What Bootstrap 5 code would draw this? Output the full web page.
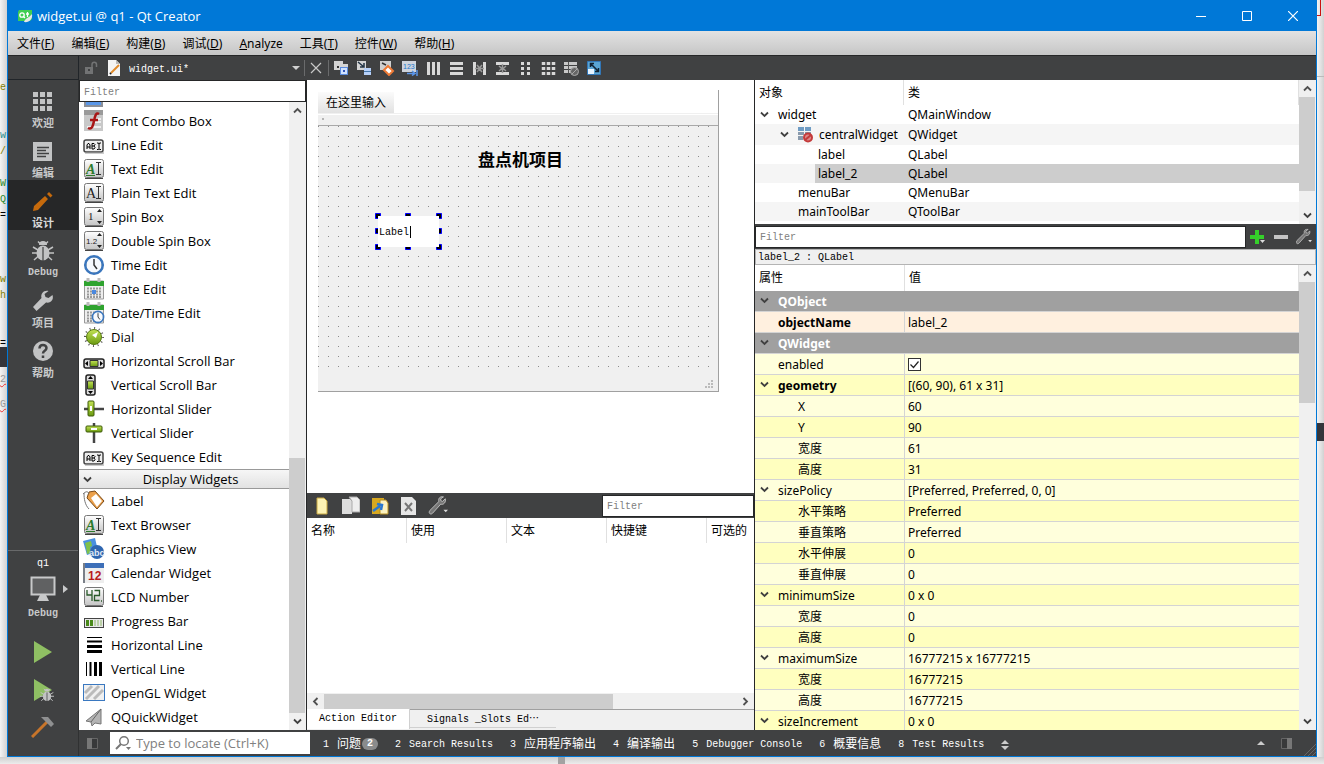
<!DOCTYPE html>
<html lang="zh-CN">
<head>
<meta charset="utf-8">
<meta name="viewport" content="width=device-width, initial-scale=1">
<title>widget.ui @ q1 - Qt Creator</title>
<link href="https://cdn.jsdelivr.net/npm/bootstrap@5.3.0/dist/css/bootstrap.min.css" rel="stylesheet">
<style>
:root{--panel:#404142;--edge:#262728;--ui:"Noto Sans","Noto Sans CJK SC",sans-serif;--wide:"Open Sans","Noto Sans CJK SC",sans-serif;--fixed:"Liberation Mono","Noto Sans CJK SC",monospace}
body{font-family:var(--ui);font-size:12px;line-height:20px;color:#000;background:#e4e4e4;overflow:hidden}
button,input,select{font:inherit;color:inherit;border:0;padding:0;background:none;border-radius:0}
svg{display:block;flex:none}
a{color:inherit;text-decoration:none}
.mono{font-family:var(--fixed);font-size:10px}
.mono .han{font-size:12px}
.dark{background:var(--panel);color:#fff}
.fill{flex:1 1 0;min-height:0;min-width:0}
.desk{width:7px;overflow:hidden;line-height:16px;background:linear-gradient(to right,#f4f4f4,#d2d2d2)}
.desk-l{padding-top:80px;font-family:var(--fixed);font-size:10px}
.desk-l .code{height:16px}
.desk-l .tip{height:20px;margin-top:-5px;background:#34353a}
.desk-l .note{height:25px;line-height:25px;color:#999;text-decoration:underline wavy #e33 1px}
.desk-r .mark-red{height:16px;width:4px;border-right:1px solid #c11;border-bottom:1px solid #c11}
.desk-r .rule{height:61px;border-bottom:1px solid #bbb}
.desk-r .tip{height:18px;background:#34353a;margin-top:346px}
.desk-b{height:7px;background:linear-gradient(#cfcfcf,#ececec)}
.desk-b i{width:7px;margin-left:551px;background:#a2a2a2}
.app{border:1px solid #0078d7;border-top:0}
.titlebar,.menus,.tools,.status,.bar,.who,.tree,.field,.hsb,.tabs{flex-shrink:0}
.bar .field.flex-grow-1{flex-shrink:1}
.titlebar{height:31px;background:#0078d7;color:#fff;font-family:var(--wide);font-size:13px;padding-left:9px}
.titlebar button{width:46px;height:31px}
.menus{height:24px;padding:0 9px;background:linear-gradient(#e2e2e2,#c6c6c6);gap:17px;line-height:26px}
.tools{height:25px;border-top:1px solid var(--edge)}
.modes{width:71px;border-right:1px solid #303132;color:#c8c9ca}
.mode{height:50px;width:100%;font-size:11px;line-height:14px;font-weight:700;gap:4px;padding-top:10px}
.mode.on{background:var(--edge);color:#d8d8d8}
.mode .mono,.kit .mono{font-weight:700;font-size:10px}
.kit{border-top:1px solid #68696a;height:206px;padding-top:1px}
.kit .go{margin-top:14px}
.box{width:228px;border-right:1px solid var(--edge)}
.field{height:22px;background:#fff;color:#000;padding:2px 4px 0;border:1px solid var(--edge);min-width:0}
.field::placeholder{color:#808080;opacity:1}
.field:focus,select:focus{outline:0}
.items{font-family:var(--wide);font-size:13px;min-height:0;padding-bottom:1px}
.item{height:24px;padding-left:4px;gap:6px;flex:none;white-space:nowrap}
.group{height:20px;flex:none;border-top:1px solid #999;border-bottom:1px solid #999;background:linear-gradient(#f6f6f6,#e2e2e2);line-height:18px}
.sb{width:17px;background:#f0f0f0;flex:none;display:flex;flex-direction:column}
.sb .cap{height:17px;display:flex;align-items:center;justify-content:center;flex:none}
.sb .track{flex:1;min-height:0;padding-right:1px}
.sb .thumb{background:#cdcdcd}
.hsb{height:16px;background:#f0f0f0}
.hsb .thumb{background:#cdcdcd;height:15px}
.center{flex:447 1 0;min-width:0;border-right:1px solid var(--edge)}
.right{flex:561 1 0;min-width:0}
.canvas{flex:393 1 0;min-height:0;background:#fff;padding:10px 11px}
.form{width:401px;height:302px;background:#f0f0f0;border-right:1px solid #a0a0a0;border-bottom:1px solid #a0a0a0}
.fmenu{height:24px;background:#fff;border-bottom:1px solid #f0f0f0;padding-top:2px}
.fmenu button{padding:0 8px;height:21px;background:linear-gradient(#fbfbfb,#e2e2e2)}
.ftool{height:12px;border-top:1px solid #fff;border-bottom:1px solid #a9a9a9;padding:3px 4px}
.ftool i{display:block;width:2px;height:2px;background:#b4b4b4}
.grid{height:245px;position:relative;background-image:linear-gradient(transparent 1px,#f0f0f0 1px),linear-gradient(to right,#8c8c8c 1px,transparent 1px);background-size:10px 10px}
.caption{left:160px;top:22px;font-size:17px;line-height:24px;font-weight:700}
.sel{left:57px;top:87px;width:67px;height:37px}
.sel input{left:3px;top:3px;width:61px;height:31px;background:#fff;padding:2px 1px 0;font-size:10px}
.sel .caret{left:35px;top:13px;width:1px;height:12px;background:#000}
.actions{flex:237 1 0;min-height:0;background:#fff}
.bar{height:25px}
.hd{height:25px;line-height:24px;padding:0 4px;font-weight:400;border-right:1px solid #e0e0e0;white-space:nowrap}
.tabs{height:21px;background:#f0f0f0}
.tabs button{height:20px}
.tabs .t1{background:#fff;width:103px;border-right:1px solid #d0d0d0}
.tabs .t2{width:146px;height:19px;border-top:1px solid #a0a0a0;border-bottom:1px solid #d0d0d0}
.tabs .rest{border-top:1px solid #a0a0a0}
table{table-layout:fixed;width:100%;border-collapse:separate;border-spacing:0}
td,th{padding:0;overflow:hidden;white-space:nowrap}
.tree{background:#fff;height:144px}
.tree td{height:19px;line-height:19px}
.tree tr.first td{line-height:18px}
.tree tr.mid td{height:21px}
.tree .alt td{background:#f5f5f5}
.tree .alt .cur{background:#cdcdcd}
.tree div.cur{padding-left:3px}
.who{height:16px;line-height:15px;background:#f0f0f0;border:1px solid #b4b4b4;padding:0 2px}
.props .hd{height:26px;line-height:26px}
.props td{height:21px;line-height:20px;padding-top:1px;padding-bottom:0;line-height:19px;border-bottom:1px solid #d4d4d4}
.props td:first-child{border-right:1px solid #d4d4d4}
.props td:nth-child(2){padding-left:3px}
.props .a td{background:#ffffdc}
.props .b td{background:#ffffbf}
.props .o td{background:#fff0df}
.props .g td{background:#a0a0a0;color:#fff;font-weight:700;border-right:0}
.tw{display:inline-block;width:23px;padding-left:5px;vertical-align:top}
.tw svg{margin-top:4px}
td.lead1{padding-left:23px}
td.sub2{padding-left:43px}
.tick{appearance:none;width:13px;height:13px;margin:3px 0 0;border:1px solid #333;background:#fff url("data:image/svg+xml,%3Csvg xmlns='http://www.w3.org/2000/svg' viewBox='0 0 11 11'%3E%3Cpath d='M1.500 5.500l3 3 5-6' fill='none' stroke='%23222' stroke-width='1.200'/%3E%3C/svg%3E");display:block}
.status{height:26px}
.status .outs{gap:17px;padding:3px 0 0 13px}
.status .outs button{display:flex;align-items:center;gap:8px}
.locate{width:200px;height:22px;background:#fff}
.locate input{font-family:var(--wide);font-size:13px;width:170px}
.locate input::placeholder{color:#808080;opacity:1}
.pill{width:16px;height:12px;border-radius:6px;background:#8a8b8c;font-weight:700;line-height:12px;margin:-2px 0 0 -7px}
</style>
</head>
<body class="vh-100 d-flex flex-column m-0">
<svg width="0" height="0" class="position-absolute" aria-hidden="true"><defs>
<linearGradient id="gk" x2="0" y2="1"><stop stop-color="#fff"/><stop offset="1" stop-color="#c4c4c4"/></linearGradient>
<linearGradient id="gg" x2="0" y2="1"><stop stop-color="#c4e356"/><stop offset="1" stop-color="#6a9a10"/></linearGradient>
<symbol id="dn" viewBox="0 0 9 9"><path d="M1 2.500l3.500 3.500 3.500-3.500" fill="none" stroke="#404040" stroke-width="1.800"/></symbol>
<symbol id="up" viewBox="0 0 9 9"><path d="M1 6.500l3.500-3.500 3.500 3.500" fill="none" stroke="#505050" stroke-width="1.800"/></symbol>
<symbol id="lt" viewBox="0 0 9 9"><path d="M6.500 1l-3.500 3.500 3.500 3.500" fill="none" stroke="#505050" stroke-width="1.800"/></symbol>
<symbol id="rt" viewBox="0 0 9 9"><path d="M2.500 1l3.500 3.500-3.500 3.500" fill="none" stroke="#505050" stroke-width="1.800"/></symbol>
<symbol id="key" viewBox="0 0 22 22"><rect x="1.500" y="1.500" width="19" height="18" rx="2" fill="url(#gk)" stroke="#777"/><path d="M2 20.500h18" stroke="#444"/></symbol>
<symbol id="bug" viewBox="0 0 22 22"><path d="M7 5a4 4 0 0 1 8 0z" fill="#c2c3c4"/><ellipse cx="11" cy="13" rx="6.500" ry="7.500" fill="#c2c3c4"/><path d="M6 1.500l2.500 2.500M16 1.500L13.500 4M1 7l5 3M0 13h6M2 20l4.500-4M21 7l-5 3M22 13h-6M20 20l-4.500-4" fill="none" stroke="#c2c3c4" stroke-width="1.500"/><path d="M11 7v14" stroke="#404142" stroke-width="1.200"/></symbol>
<symbol id="wrench" viewBox="0 0 22 22"><path d="M20.500 5l-4 3-3-1-1-3 4-3c-5-1-8 3-7 7L1 17l3.500 4L14 12.500c5 1 8-3 6.500-7.500z" fill="#c2c3c4"/></symbol>
<symbol id="spanner" viewBox="0 0 22 22"><path d="M19 3l-3 3-2-1 0-2 3-2c-4-1-6 2-5 5L2 16c-2 3 1 5 3 3L14 9c3 1 6-2 5-6z" fill="#777" stroke="#c4c4c4"/><path d="M17 15h5l-2.500 3z" fill="#ddd"/></symbol>
<symbol id="abi" viewBox="0 0 22 22"><rect x="1" y="6" width="19" height="12" rx="2" fill="#eee" stroke="#444" stroke-width="1.500"/><path d="M2 19h19" stroke="#999"/><path d="M4 15v-4l1-1.500h1l1 1.500v4M4 13h3M9 15V9.500h2l1 1-1 1.500 1 1.500-1 1.500zM9 12h2M14 9h1.500l.5 1 .5-1H18M16 10v5M14 15.500h1.500l.5-.5.5.5H18" fill="none" stroke="#000"/></symbol>
<symbol id="cal" viewBox="0 0 22 22"><path d="M1.500 3h19v18h-19z" fill="#eee" stroke="#999"/><path d="M1 3h20v5H1z" fill="#2fa32f"/><path d="M5 0v4M16 0v4" stroke="#bbb" stroke-width="3"/><path d="M4 10.500h14M4 13.500h14M4 16.500h14M4 19h14" stroke="#999" stroke-width="2" stroke-dasharray="2 1"/></symbol>
<symbol id="clock" viewBox="0 0 22 22"><circle cx="11" cy="11" r="8.800" fill="#f6f9fd" stroke="#3a76bd" stroke-width="2.500"/><path d="M11 5v6l3 4" fill="none" stroke="#333" stroke-width="1.500"/><path d="M11 3v1M19 11h-1M3 11h1M11 18v1" stroke="#789"/></symbol>
</defs></svg>

<div class="d-flex fill">
<aside class="desk desk-l flex-shrink-0" aria-hidden="true">
<div class="code" style="color:#808000">e</div><div class="code"></div><div class="code"></div>
<div class="code" style="color:#2a8f8f">w</div><div class="code" style="color:#808000">/</div><div class="code"></div>
<div class="code" style="color:#2a8a2a">W</div><div class="code" style="color:#2a8a2a">Q</div><div class="code">=</div>
<div class="code"></div><div class="code"></div><div class="code"></div>
<div class="code" style="color:#808000">w</div><div class="code" style="color:#808000">h</div><div class="code"></div><div class="code"></div><div class="code">=</div>
<div class="tip"></div><div class="note">2</div><div class="note">G</div>
</aside>

<main class="app flex-grow-1 d-flex flex-column" style="min-width:0">
<header class="titlebar d-flex align-items-center">
<svg width="16" height="16" viewBox="0 0 16 16"><path d="M2 2h13v9l-2 2H1V4z" fill="#41cd52"/><circle cx="5" cy="7" r="2.200" fill="none" stroke="#fff" stroke-width="1.300"/><path d="M6 8l2 2M10.500 4v5M9 6h3" stroke="#fff" stroke-width="1.300"/><path d="M15 6c1 5-3 9-8 8 1-4 5-4 8-8z" fill="#e6e6e6"/></svg>
<span class="ms-1 flex-grow-1">widget.ui @ q1 - Qt Creator</span>
<button aria-label="最小化"><svg class="mx-auto" width="10" height="10"><path d="M0 5.500h10" stroke="#fff"/></svg></button>
<button aria-label="最大化"><svg class="mx-auto" width="10" height="10"><path d="M.5.5h9v9h-9z" fill="none" stroke="#fff"/></svg></button>
<button aria-label="关闭"><svg class="mx-auto" width="10" height="10"><path d="M0 0l10 10M10 0L0 10" stroke="#fff" stroke-width="1.200"/></svg></button>
</header>
<nav class="menus d-flex"><a href="#">文件(<u>F</u>)</a><a href="#">编辑(<u>E</u>)</a><a href="#">构建(<u>B</u>)</a><a href="#">调试(<u>D</u>)</a><a href="#"><u>A</u>nalyze</a><a href="#">工具(<u>T</u>)</a><a href="#">控件(<u>W</u>)</a><a href="#">帮助(<u>H</u>)</a></nav>

<div class="tools dark d-flex align-items-center">
<div class="modes h-100 flex-shrink-0 border-bottom border-dark"></div>
<div class="d-flex align-items-center flex-shrink-0" style="width:221px;padding-left:6px">
<svg width="14" height="14" viewBox="0 0 14 14"><path d="M0 6h8v7H0z" fill="#727374"/><path d="M7 6V3.500a2 2 0 0 1 4.500 0V6" fill="none" stroke="#727374" stroke-width="1.500"/><path d="M3 8h2v2H3z" fill="#404142"/></svg>
<svg class="ms-2" width="14" height="16" viewBox="0 0 14 16"><path d="M1 0h8l4 4v12H1z" fill="#f4f4f4"/><path d="M9 0v4h4" fill="#bbb"/><path d="M4 13l8-8" stroke="#e08a2a" stroke-width="2"/><path d="M3 14l1-1" stroke="#222" stroke-width="2"/></svg>
<select class="mono flex-grow-1 ms-2 pt-1" aria-label="打开的文件" style="appearance:none"><option>widget.ui*</option></select>
<svg width="8" height="4"><path d="M0 0h8l-4 4z" fill="#d0d0d0"/></svg>
</div>
<svg width="26" height="18" viewBox="0 0 26 18" class="ms-1"><path d="M.5 1v16M24.500 1v16" stroke="#6a6b6c"/><path d="M7 4l10 10M17 4L7 14" stroke="#c8c8c8" stroke-width="1.200"/></svg>
<div class="d-flex" style="gap:7px;margin-left:3px">
<svg width="16" height="16"><path d="M1 1h9v9H1zM8 4h7v9H8z" fill="#d4d4d4"/><rect x="7.500" y="7.500" width="7" height="7" fill="#cfe2ff" stroke="#5b8bdc"/><path d="M10 10h2v2h-2z" fill="#35b"/><path d="M4 6h2v2H4z" fill="#333"/></svg>
<svg width="16" height="16"><path d="M1 1h9v9H1z" fill="#d4d4d4"/><path d="M2 2l6 5M8 3v4H4" stroke="#234" stroke-width="1.500" fill="none"/><rect x="8" y="8" width="7" height="7" fill="#b7d0f8"/><path d="M8 11.500h7" stroke="#47a"/></svg>
<svg width="16" height="16"><path d="M1 1h11v9H1z" fill="#d0d0d0"/><path d="M3 3l4 2" stroke="#333" stroke-width="1.500"/><path d="M9 6l5 5-4 4-5-5z" fill="#fff" stroke="#ee7a35" stroke-width="2"/></svg>
<svg width="16" height="16"><path d="M0 1h14v11H0z" fill="#cfd4dc"/><text x="1" y="9" font-size="7" fill="#27c" font-family="Liberation Sans">123</text><path d="M5 13.500h7M10 11l3 2.500-3 2M15 10v6" fill="none" stroke="#5a95ea" stroke-width="1.500"/></svg>
<svg width="16" height="16"><path d="M3.500 2v13M8.500 2v13M13.500 2v13" stroke="#d8d8d8" stroke-width="3"/></svg>
<svg width="16" height="16"><path d="M2 3.500h13M2 8.500h13M2 13.500h13" stroke="#d8d8d8" stroke-width="3"/></svg>
<svg width="16" height="16"><path d="M3.500 2v13M13.500 2v13" stroke="#d8d8d8" stroke-width="3"/><path d="M4 8.500h9M6 5l3 3.500L6 12M11 5L8 8.500l3 3.500" stroke="#999" stroke-width="1.500" fill="none"/></svg>
<svg width="16" height="16"><path d="M2 3.500h13M2 13.500h13" stroke="#d8d8d8" stroke-width="3"/><path d="M8.500 4v9M5 6l3.500 3L12 6M5 11l3.500-3 3.500 3" stroke="#999" stroke-width="1.500" fill="none"/></svg>
<svg width="16" height="16"><path d="M5.500 2v14M11.500 2v14" stroke="#d8d8d8" stroke-width="3" stroke-dasharray="3 2"/></svg>
<svg width="16" height="16"><path d="M3.500 2v14M8.500 2v14M13.500 2v14" stroke="#d8d8d8" stroke-width="3.500" stroke-dasharray="3 2"/></svg>
<svg width="16" height="16"><path d="M1 3.500h13M1 7.500h13M1 11.500h10" stroke="#c8c8c8" stroke-width="3"/><path d="M5.500 2v11" stroke="#555"/><circle cx="11.500" cy="11.500" r="4" fill="#666" stroke="#aaa"/><path d="M9 14l5-5" stroke="#aaa"/></svg>
<svg width="16" height="16"><path d="M1.500 1.500h13v13h-13z" fill="#5aa5d4" stroke="#3277b8"/><path d="M2 9h6v5H2z" fill="#e8f4ff"/><path d="M5 4l7 7M4.500 7V3.500H8M12.500 8v3.500H9" stroke="#123" stroke-width="1.500" fill="none"/></svg>
</div>
</div>

<div class="d-flex fill">
<nav class="modes dark d-flex flex-column flex-shrink-0">
<button class="mode d-flex flex-column align-items-center"><svg width="22" height="22"><path d="M3.500 2v20M10.500 2v20M17.500 2v20" stroke="#c2c3c4" stroke-width="5" stroke-dasharray="5 2"/></svg>欢迎</button>
<button class="mode d-flex flex-column align-items-center"><svg width="22" height="22"><path d="M1 2h19v19H1z" fill="#c2c3c4"/><path d="M5 7.500h12M5 10.500h9M5 13.500h12M5 16.500h9" stroke="#404142" stroke-width="1.500"/></svg>编辑</button>
<button class="mode on d-flex flex-column align-items-center"><svg width="22" height="22"><path d="M1 21l1-5L13 6l3 3L6 20zM15 4l2-2 3.500 3.500-2 2z" fill="#c66a0c"/></svg>设计</button>
<button class="mode d-flex flex-column align-items-center"><svg width="22" height="22"><use href="#bug"/></svg><span class="mono">Debug</span></button>
<button class="mode d-flex flex-column align-items-center"><svg width="22" height="22"><use href="#wrench"/></svg>项目</button>
<button class="mode d-flex flex-column align-items-center"><svg width="22" height="22"><circle cx="11" cy="11" r="10" fill="#c2c3c4"/><path d="M7.500 8.500c0-5 7-4.500 7-.5 0 3-3.500 2.500-3.500 5.500M11 15.500V18" fill="none" stroke="#404142" stroke-width="2.500"/></svg>帮助</button>
<div class="kit mt-auto d-flex flex-column align-items-center">
<span class="mono fw-normal text-white" style="line-height:24px">q1</span>
<button class="d-flex align-items-center w-100 justify-content-end" style="gap:7px;padding-right:10px" aria-label="Debug 套件"><svg width="26" height="26"><path d="M1.500 1.500h23v17h-23z" fill="#606162" stroke="#c8c9ca" stroke-width="2"/><path d="M10 19h6l3 6H7z" fill="#c8c9ca"/></svg><svg width="5" height="8"><path d="M0 0l5 4-5 4z" fill="#c8c9ca"/></svg></button>
<span class="mono" style="line-height:24px">Debug</span>
<button class="go" aria-label="运行"><svg width="22" height="24"><path d="M2 1l18 11L2 23z" fill="#8fbf63"/></svg></button>
<button class="go" aria-label="调试"><svg width="22" height="24"><path d="M2 1l18 11L2 23z" fill="#8fbf63"/><use href="#bug" x="8" y="10" width="14" height="14"/></svg></button>
<button class="go" aria-label="构建"><svg width="24" height="22"><path d="M1 21L16 6" stroke="#c8752a" stroke-width="3"/><path d="M10 1h7l6 7-3 3-6-6z" fill="#8f9091"/></svg></button>
</div>
</nav>

<div class="fill d-flex flex-column">
<div class="d-flex fill">
<section class="box d-flex flex-column flex-shrink-0 bg-white">
<input class="field mono w-100" placeholder="Filter" aria-label="Filter widgets">
<div class="d-flex fill">
<div class="items flex-grow-1 d-flex flex-column justify-content-end overflow-hidden">
<div class="item d-flex align-items-center"><svg width="22" height="22"><path d="M1 1h19v20H1z" fill="#8b9099"/><path d="M3 16h15v3H3z" fill="#5b97e8"/></svg></div>
<div class="item d-flex align-items-center"><svg width="22" height="22"><path d="M1 0h19v21H1z" fill="#9a9a9a"/><path d="M1 5h19v16H1z" fill="#c8c8c8"/><path d="M10 9h8M10 12h8M4 17h14" stroke="#eee" stroke-width="2"/><path d="M16 4c-3-2-4 2-5 7s-2 9-6 7M7 10h8" stroke="#a81515" stroke-width="2.500" fill="none"/></svg><span>Font Combo Box</span></div>
<div class="item d-flex align-items-center"><svg width="22" height="22"><use href="#abi"/></svg><span>Line Edit</span></div>
<div class="item d-flex align-items-center"><svg width="22" height="22"><use href="#key"/><text x="3" y="16" font-size="14" font-style="italic" font-weight="700" fill="#2c7a2c" font-family="Liberation Serif">A</text><path d="M3 17.500h9" stroke="#2c7a2c"/><path d="M13 4.500h5M13 16.500h5M15.500 5v11" stroke="#333"/></svg><span>Text Edit</span></div>
<div class="item d-flex align-items-center"><svg width="22" height="22"><use href="#key"/><text x="3" y="16" font-size="14" fill="#222" font-family="Liberation Serif">A</text><path d="M13 4.500h5M13 16.500h5M15.500 5v11" stroke="#333"/></svg><span>Plain Text Edit</span></div>
<div class="item d-flex align-items-center"><svg width="22" height="22"><use href="#key"/><text x="5" y="14" font-size="11" fill="#222" font-family="Liberation Serif">1</text><path d="M14 6h5l-2.500-3zM14 15h5l-2.500 3z" fill="#222"/></svg><span>Spin Box</span></div>
<div class="item d-flex align-items-center"><svg width="22" height="22"><use href="#key"/><text x="3" y="14" font-size="8" fill="#222" font-family="Liberation Sans">1.2</text><path d="M14 6h5l-2.500-3zM14 15h5l-2.500 3z" fill="#222"/></svg><span>Double Spin Box</span></div>
<div class="item d-flex align-items-center"><svg width="22" height="22"><use href="#clock"/></svg><span>Time Edit</span></div>
<div class="item d-flex align-items-center"><svg width="22" height="22"><use href="#cal"/><path d="M9 12h4v4H9z" fill="#4a88e0"/></svg><span>Date Edit</span></div>
<div class="item d-flex align-items-center"><svg width="22" height="22"><use href="#cal"/><use href="#clock" x="8" y="8" width="14" height="14"/></svg><span>Date/Time Edit</span></div>
<div class="item d-flex align-items-center"><svg width="22" height="22"><circle cx="11" cy="11" r="9" fill="none" stroke="#555" stroke-width="2" stroke-dasharray="1 3.700"/><circle cx="11" cy="11" r="7.500" fill="url(#gg)" stroke="#56790f"/><path d="M15 6l-2 6-4-3z" fill="#fff"/></svg><span>Dial</span></div>
<div class="item d-flex align-items-center"><svg width="22" height="22"><rect x="1" y="9" width="20" height="9" rx="2" fill="#ddd" stroke="#222" stroke-width="1.500"/><path d="M7 10.500h8v6H7z" fill="url(#gg)" stroke="#333"/><path d="M5 11v5l-3-2.500zM17 11v5l3-2.500z"/></svg><span>Horizontal Scroll Bar</span></div>
<div class="item d-flex align-items-center"><svg width="22" height="22"><rect x="3" y="1" width="9" height="20" rx="2" fill="#ddd" stroke="#222" stroke-width="1.500"/><path d="M4.500 7h6v8h-6z" fill="url(#gg)" stroke="#333"/><path d="M5 5h5L7.500 2zM5 17h5l-2.500 3z"/></svg><span>Vertical Scroll Bar</span></div>
<div class="item d-flex align-items-center"><svg width="22" height="22"><path d="M1 11h20" stroke="#444" stroke-width="2.500"/><rect x="5" y="3" width="6" height="15" rx="1" fill="url(#gg)" stroke="#3d5a08"/><path d="M8 8v5" stroke="#fff" stroke-width="2"/></svg><span>Horizontal Slider</span></div>
<div class="item d-flex align-items-center"><svg width="22" height="22"><path d="M11 1v20" stroke="#444" stroke-width="2.500"/><rect x="3" y="4" width="16" height="6" rx="1" fill="url(#gg)" stroke="#3d5a08"/><path d="M8 7h6" stroke="#fff" stroke-width="2"/></svg><span>Vertical Slider</span></div>
<div class="item d-flex align-items-center"><svg width="22" height="22"><use href="#abi"/></svg><span>Key Sequence Edit</span></div>
<button class="group d-flex align-items-center ps-1"><svg width="9" height="9"><use href="#dn"/></svg><span class="flex-grow-1 text-center">Display Widgets</span></button>
<div class="item d-flex align-items-center"><svg width="22" height="22"><path d="M6 2l6-1 9 10-7 8L4 8z" fill="#eba04a" stroke="#7a4a18"/><path d="M8 8l5-4 6 7-5 6z" fill="#fff"/><path d="M0 4c3-3 5-3 6 0M1 3c0 6 1 12 5 16" stroke="#777" fill="none"/></svg><span>Label</span></div>
<div class="item d-flex align-items-center"><svg width="22" height="22"><use href="#key"/><text x="3" y="16" font-size="14" font-style="italic" font-weight="700" fill="#2c7a2c" font-family="Liberation Serif">A</text><path d="M3 17.500h9" stroke="#2c7a2c"/><path d="M13 4.500h5M13 16.500h5M15.500 5v11" stroke="#333"/></svg><span>Text Browser</span></div>
<div class="item d-flex align-items-center"><svg width="22" height="22"><path d="M0 3l12-3 3 13-11 4z" fill="#4a90e0"/><path d="M2 5l6-2 1 5-2 1 1 6-4 1-1-7z" fill="#7fc04a"/><circle cx="14" cy="14" r="7" fill="#2f66b0"/><text x="6" y="18" font-size="9" font-weight="700" fill="#dfe8f4" font-family="Liberation Sans">abc</text></svg><span>Graphics View</span></div>
<div class="item d-flex align-items-center"><svg width="22" height="22"><path d="M0 1h21v20H0z" fill="#7a7f88"/><path d="M2 6h19v15H2z" fill="#eee"/><path d="M2 1h19v5H2z" fill="#3d6fb8"/><text x="5" y="18" font-size="12" font-weight="700" fill="#b81c1c" font-family="Liberation Sans">12</text></svg><span>Calendar Widget</span></div>
<div class="item d-flex align-items-center"><svg width="22" height="22"><use href="#key"/><path d="M4 4v5h5M9 4v11M11.500 4.500h5v5h-5v5h5M18 15h1" fill="none" stroke="#2a5a2a" stroke-width="1.300"/></svg><span>LCD Number</span></div>
<div class="item d-flex align-items-center"><svg width="22" height="22"><rect x="1.500" y="8.500" width="19" height="9" fill="#e8e8e8" stroke="#444"/><path d="M3 13h3M7 13h3" stroke="#4a8a1a" stroke-width="6"/><path d="M11 13h2M14 13h2M17 13h2" stroke="#bcd0a8" stroke-width="6"/></svg><span>Progress Bar</span></div>
<div class="item d-flex align-items-center"><svg width="22" height="22"><path d="M4 3.500h15" stroke="#000"/><path d="M4 7.500h15" stroke="#000" stroke-width="2"/><path d="M4 12.500h15M4 17.500h15" stroke="#000" stroke-width="3"/></svg><span>Horizontal Line</span></div>
<div class="item d-flex align-items-center"><svg width="22" height="22"><path d="M3.500 4v14" stroke="#000"/><path d="M7.500 4v14" stroke="#000" stroke-width="2"/><path d="M12.500 4v14M17.500 4v14" stroke="#000" stroke-width="3"/></svg><span>Vertical Line</span></div>
<div class="item d-flex align-items-center"><svg width="22" height="22"><rect x=".5" y="2.500" width="21" height="16" fill="#f0f0f0" stroke="#3a78c0"/><path d="M2 11l7-7M3 17L16 4M11 17l9-9" stroke="#bbb" stroke-width="3"/></svg><span>OpenGL Widget</span></div>
<div class="item d-flex align-items-center"><svg width="22" height="22"><path d="M18 3L3 15l5 1 1 4 3-3 6 1z" fill="#b4b4b4" stroke="#777"/><path d="M18 3L8 16" stroke="#666"/></svg><span>QQuickWidget</span></div>
</div>
<div class="sb"><div class="cap"><svg width="9" height="9"><use href="#up"/></svg></div><div class="track d-flex flex-column justify-content-end"><div class="thumb" style="height:43%"></div></div><div class="cap"><svg width="9" height="9"><use href="#dn"/></svg></div></div>
</div>
</section>

<section class="center d-flex flex-column">
<div class="canvas">
<div class="form">
<div class="fmenu"><button>在这里输入</button></div>
<div class="ftool"><i></i></div>
<div class="grid">
<div class="caption position-absolute">盘点机项目</div>
<div class="sel position-absolute">
<svg width="67" height="37"><path d="M.5.5h5v5h-5zM30.500.5h5v5h-5zM61.500.5h5v5h-5zM.5 15.500h5v5h-5zM61.500 15.500h5v5h-5zM.5 31.500h5v5h-5zM30.500 31.500h5v5h-5zM61.500 31.500h5v5h-5z" fill="#000" stroke="#00f"/></svg>
<input class="mono position-absolute" value="Label" aria-label="label_2"><i class="caret position-absolute"></i>
</div>
</div>
<svg class="ms-auto me-1" width="9" height="18"><path d="M6 9h2v2H6zM3 12h2v2H3zM6 12h2v2H6zM0 15h2v2H0zM3 15h2v2H3zM6 15h2v2H6z" fill="#bbb"/></svg>
</div>
</div>
<div class="actions d-flex flex-column">
<div class="bar dark d-flex align-items-center ps-1">
<div class="d-flex flex-grow-1" style="gap:9px">
<button aria-label="新建"><svg width="20" height="20"><path d="M6 2h7l3 3v13H6z" fill="#fdf3b4" stroke="#c8a840"/></svg></button>
<button aria-label="复制"><svg width="20" height="20"><path d="M2 3h8l2 2v13H2z" fill="#ddd"/><path d="M9 1h8l3 3v12h-8V5z" fill="#eee" stroke="#aaa"/></svg></button>
<button aria-label="粘贴"><svg width="20" height="20"><path d="M3 2h12v16H3z" fill="#d8a820"/><path d="M11 4h6l2 3v11h-8z" fill="#fdf3c0" stroke="#b89020"/><path d="M4 15l7-5M8 8l5 1-1 5" stroke="#2a78d0" stroke-width="2.500" fill="none"/></svg></button>
<button aria-label="删除"><svg width="20" height="20"><path d="M3 1h11l4 4v14H3z" fill="#e6e6e6"/><path d="M7 7l7 8M14 7l-7 8" stroke="#777" stroke-width="2"/></svg></button>
<button aria-label="配置"><svg width="22" height="20"><use href="#spanner"/></svg></button>
</div>
<input class="field mono" style="width:152px" placeholder="Filter" aria-label="Filter actions">
</div>
<table><colgroup><col style="width:100px"><col style="width:100px"><col style="width:100px"><col style="width:100px"><col></colgroup><thead><tr><th class="hd">名称</th><th class="hd">使用</th><th class="hd">文本</th><th class="hd">快捷键</th><th class="hd border-0">可选的</th></tr></thead></table>
<div class="hsb d-flex align-items-center mt-auto px-1"><svg width="9" height="9"><use href="#lt"/></svg><div class="flex-grow-1 px-1"><div class="thumb" style="width:70%"></div></div><svg width="9" height="9"><use href="#rt"/></svg></div>
<div class="tabs mono d-flex"><button class="t1">Action Editor</button><button class="t2">Signals _Slots Ed⋯</button><div class="rest flex-grow-1"></div></div>
</div>
</section>

<section class="right d-flex flex-column">
<div class="tree d-flex">
<table class="align-self-start"><colgroup><col style="width:149px"><col></colgroup>
<thead><tr><th class="hd">对象</th><th class="hd">类</th></tr></thead>
<tbody>
<tr class="first"><td><span class="tw"><svg width="9" height="9"><use href="#dn"/></svg></span>widget</td><td class="ps-1">QMainWindow</td></tr>
<tr class="mid alt"><td><div class="d-flex align-items-center" style="padding-left:25px"><svg width="9" height="9"><use href="#dn"/></svg><svg width="17" height="17" style="margin:0 5px 0 8px"><path d="M1 1h6v4H1zM8 1h6v4H8z" fill="#6f9cc4"/><path d="M1 6h6v3H1zM1 10h5v4H1zM8 6h6v3H8z" fill="#8a9aac"/><circle cx="11" cy="11.500" r="4" fill="#d88" stroke="#c43a3a" stroke-width="2"/><path d="M8 14l6-5" stroke="#c43a3a" stroke-width="2"/></svg>centralWidget</div></td><td class="ps-1">QWidget</td></tr>
<tr><td style="padding-left:63px">label</td><td class="ps-1">QLabel</td></tr>
<tr class="alt"><td><div class="cur" style="margin-left:60px">label_2</div></td><td class="cur ps-1">QLabel</td></tr>
<tr><td class="sub2">menuBar</td><td class="ps-1">QMenuBar</td></tr>
<tr class="alt"><td class="sub2">mainToolBar</td><td class="ps-1">QToolBar</td></tr>
</tbody></table>
<div class="sb"><div class="cap"><svg width="9" height="9"><use href="#up"/></svg></div><div class="track"><div class="thumb" style="height:85%"></div></div><div class="cap"><svg width="9" height="9"><use href="#dn"/></svg></div></div>
</div>
<div class="bar dark d-flex align-items-center pe-1">
<input class="field mono flex-grow-1 me-1" placeholder="Filter" aria-label="Filter properties">
<button class="me-2" aria-label="添加"><svg width="16" height="16"><path d="M5 1h4v5h5v4H9v5H5v-5H0V6h5z" fill="#35d02a"/><path d="M10 11h5l-2.500 3z" fill="#ddd"/></svg></button>
<button class="me-2" aria-label="移除"><svg width="14" height="16"><path d="M0 6h14v4H0z" fill="#c4c4c4"/></svg></button>
<button aria-label="配置"><svg width="16" height="18" viewBox="1 0 21 22"><use href="#spanner" width="22" height="22"/></svg></button>
</div>
<div class="who mono">label_2 : QLabel</div>
<div class="d-flex fill overflow-hidden bg-white">
<table class="props align-self-start"><colgroup><col style="width:150px"><col></colgroup>
<thead><tr><th class="hd">属性</th><th class="hd">值</th></tr></thead>
<tbody>
<tr class="g"><td><span class="tw"><svg width="9" height="9"><use href="#dn"/></svg></span>QObject</td><td></td></tr>
<tr class="o"><td class="lead1 fw-bold">objectName</td><td>label_2</td></tr>
<tr class="g"><td><span class="tw"><svg width="9" height="9"><use href="#dn"/></svg></span>QWidget</td><td></td></tr>
<tr class="a"><td class="lead1"><label for="en">enabled</label></td><td class="align-top"><input class="tick" type="checkbox" id="en" checked></td></tr>
<tr class="b"><td class="fw-bold"><span class="tw"><svg width="9" height="9"><use href="#dn"/></svg></span>geometry</td><td>[(60, 90), 61 x 31]</td></tr>
<tr class="a"><td class="sub2">X</td><td>60</td></tr>
<tr class="b"><td class="sub2">Y</td><td>90</td></tr>
<tr class="a"><td class="sub2">宽度</td><td>61</td></tr>
<tr class="b"><td class="sub2">高度</td><td>31</td></tr>
<tr class="a"><td><span class="tw"><svg width="9" height="9"><use href="#dn"/></svg></span>sizePolicy</td><td>[Preferred, Preferred, 0, 0]</td></tr>
<tr class="b"><td class="sub2">水平策略</td><td>Preferred</td></tr>
<tr class="a"><td class="sub2">垂直策略</td><td>Preferred</td></tr>
<tr class="b"><td class="sub2">水平伸展</td><td>0</td></tr>
<tr class="a"><td class="sub2">垂直伸展</td><td>0</td></tr>
<tr class="b"><td><span class="tw"><svg width="9" height="9"><use href="#dn"/></svg></span>minimumSize</td><td>0 x 0</td></tr>
<tr class="a"><td class="sub2">宽度</td><td>0</td></tr>
<tr class="b"><td class="sub2">高度</td><td>0</td></tr>
<tr class="a"><td><span class="tw"><svg width="9" height="9"><use href="#dn"/></svg></span>maximumSize</td><td>16777215 x 16777215</td></tr>
<tr class="b"><td class="sub2">宽度</td><td>16777215</td></tr>
<tr class="a"><td class="sub2">高度</td><td>16777215</td></tr>
<tr class="b"><td><span class="tw"><svg width="9" height="9"><use href="#dn"/></svg></span>sizeIncrement</td><td>0 x 0</td></tr>
</tbody></table>
<div class="sb"><div class="cap"><svg width="9" height="9"><use href="#up"/></svg></div><div class="track"><div class="thumb" style="height:28%"></div></div><div class="cap"><svg width="9" height="9"><use href="#dn"/></svg></div></div>
</div>
</section>
</div>

<footer class="status dark mono d-flex align-items-center">
<button class="flex-shrink-0" style="width:31px" aria-label="侧边栏"><svg class="ms-2" width="11" height="11"><path d="M.5.5h10v10H.5z" fill="#38393a" stroke="#666"/><path d="M0 0h5v11H0z" fill="#777"/></svg></button>
<label class="locate d-flex align-items-center flex-shrink-0 px-1"><svg width="18" height="16" class="me-1"><circle cx="10" cy="6" r="4.300" fill="none" stroke="#777" stroke-width="1.500"/><path d="M7 9l-5 5" stroke="#777" stroke-width="2"/><path d="M12 12h5l-2.500 3z" fill="#777"/></svg><input placeholder="Type to locate (Ctrl+K)" aria-label="Type to locate"></label>
<div class="outs d-flex align-items-center flex-grow-1 h-100">
<button>1<span class="han">问题</span><span class="pill">2</span></button>
<button>2<span>Search Results</span></button>
<button>3<span class="han">应用程序输出</span></button>
<button>4<span class="han">编译输出</span></button>
<button>5<span>Debugger Console</span></button>
<button>6<span class="han">概要信息</span></button>
<button>8<span>Test Results</span></button>
<button aria-label="输出窗格"><svg width="8" height="10"><path d="M0 4h8L4 0zM0 6h8l-4 4z" fill="#ccc"/></svg></button>
</div>
<button class="me-3" aria-label="展开"><svg width="8" height="4"><path d="M0 4h8L4 0z" fill="#ccc"/></svg></button>
<button class="me-2" aria-label="右侧边栏"><svg width="11" height="11"><path d="M.5.5h10v10H.5z" fill="#38393a" stroke="#666"/><path d="M6 0h5v11H6z" fill="#777"/></svg></button>
<svg class="align-self-end ms-1" width="12" height="14"><path d="M0 14L12 2M4 14l8-8M8 14l4-4" stroke="#666"/></svg>
</footer>
</div>
</div>
</main>

<aside class="desk desk-r flex-shrink-0" aria-hidden="true"><div class="mark-red"></div><div class="rule"></div><div class="tip"></div></aside>
</div>
<div class="desk-b flex-shrink-0 d-flex" style="padding-left:7px"><i></i></div>
<script src="https://cdn.jsdelivr.net/npm/bootstrap@5.3.0/dist/js/bootstrap.bundle.min.js"></script>
</body>
</html>
